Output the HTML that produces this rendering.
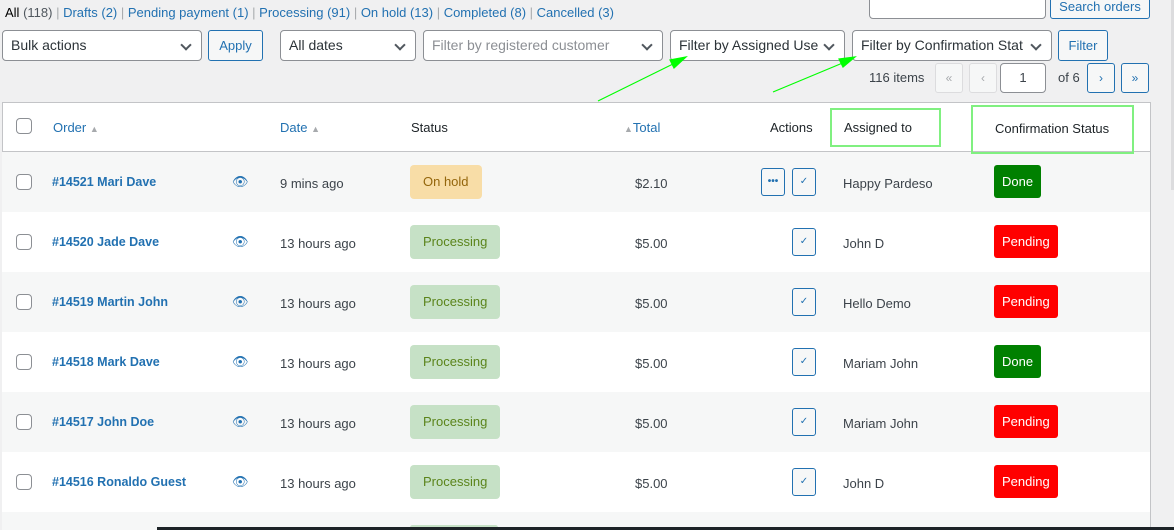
<!DOCTYPE html>
<html style="width:1174px;height:530px;overflow:hidden"><head><meta charset="utf-8"><style>
*{box-sizing:border-box;margin:0;padding:0}
body{width:1174px;height:530px;overflow:hidden;background:#f0f0f1;font-family:"Liberation Sans",sans-serif;font-size:13px;color:#3c434a;position:relative}
.a{position:absolute}
a,.lk{color:#2271b1;text-decoration:none}
.sel{position:absolute;height:31px;background:#fff;border:1px solid #8c8f94;border-radius:4px;padding:0 8px;line-height:29px;font-size:14px;color:#2c3338;white-space:nowrap;overflow:hidden}
.sel span{display:block;overflow:hidden;white-space:nowrap}
.sel:after{content:"";position:absolute;right:11px;top:10px;width:6px;height:6px;border-right:2px solid #50575e;border-bottom:2px solid #50575e;transform:rotate(45deg)}
.btn{position:absolute;height:31px;border:1px solid #2271b1;border-radius:3px;background:#f6f7f7;color:#2271b1;text-align:center;line-height:29px;font-size:13px}
.pg{position:absolute;top:63px;width:28px;height:30px;border:1px solid #2271b1;border-radius:3px;background:#f6f7f7;color:#2271b1;text-align:center;line-height:28px;font-size:12px}
.pg.d{border-color:#dcdcde;color:#a7aaad}
.row{position:absolute;left:2px;width:1148px;height:60px}
.cb{position:absolute;left:16px;width:16px;height:16px;border:1px solid #8c8f94;border-radius:4px;background:#fff}
.st{position:absolute;left:410px;height:34px;border-radius:4px;line-height:34px;padding:0 13px;font-size:13px}
.pr{background:#c6e1c6;color:#5b841b}
.oh{background:#f8dda7;color:#94660c}
.ab{position:absolute;width:24px;height:28px;border:1px solid #2271b1;border-radius:3px;background:#f6f7f7;color:#2271b1;text-align:center;line-height:26px;font-size:10px}
.cs{position:absolute;left:994px;height:33px;border-radius:3px;color:#fff;line-height:33px;font-size:13px;padding:0 8px}
.done{background:#008000}.pend{background:#ff0000}
.ol{font-weight:bold;font-size:12.5px}
</style></head><body>
<div class="a" style="left:5px;top:5px;font-size:13px;white-space:nowrap;color:#a7aaad"><span style="color:#000">All</span> <span style="color:#50575e">(118)</span> | <a>Drafts (2)</a> | <a>Pending payment (1)</a> | <a>Processing (91)</a> | <a>On hold (13)</a> | <a>Completed (8)</a> | <a>Cancelled (3)</a></div>
<div class="a" style="left:869px;top:-12px;width:177px;height:31px;background:#fff;border:1px solid #8c8f94;border-radius:4px"></div>
<div class="btn" style="left:1050px;top:-12px;width:100px;height:31px;line-height:35px">Search orders</div>
<div class="sel" style="left:2px;top:30px;width:200px">Bulk actions</div>
<div class="btn" style="left:208px;top:30px;width:55px">Apply</div>
<div class="sel" style="left:280px;top:30px;width:136px">All dates</div>
<div class="sel" style="left:423px;top:30px;width:240px;color:#8c8f94">Filter by registered customer</div>
<div class="sel" style="left:670px;top:30px;width:175px;padding-right:26px"><span>Filter by Assigned User</span></div>
<div class="sel" style="left:852px;top:30px;width:200px;padding-right:28px"><span>Filter by Confirmation Status</span></div>
<div class="btn" style="left:1058px;top:30px;width:50px">Filter</div>
<div class="a" style="left:869px;top:70px;font-size:13px">116 items</div>
<div class="pg d" style="left:935px">«</div>
<div class="pg d" style="left:969px">‹</div>
<div class="a" style="left:1000px;top:63px;width:46px;height:30px;background:#fff;border:1px solid #8c8f94;border-radius:4px;text-align:center;line-height:28px;font-size:13px">1</div>
<div class="a" style="left:1058px;top:70px">of 6</div>
<div class="pg" style="left:1087px">›</div>
<div class="pg" style="left:1121px">»</div>
<!-- table -->
<div class="a" style="left:2px;top:102px;width:1149px;height:428px;background:#fff;border:1px solid #c3c4c7;border-bottom:none"></div>
<div class="a" style="left:2px;top:151px;width:1148px;height:1px;background:#c3c4c7"></div>
<div class="cb" style="top:118px"></div>
<div class="a lk" style="left:53px;top:120px;font-size:13px">Order <span style="color:#a7aaad;font-size:9px">▲</span></div>
<div class="a lk" style="left:280px;top:120px">Date <span style="color:#a7aaad;font-size:9px">▲</span></div>
<div class="a" style="left:411px;top:120px;color:#1d2327">Status</div>
<div class="a lk" style="left:624px;top:120px"><span style="color:#a7aaad;font-size:9px">▲</span>Total</div>
<div class="a" style="left:770px;top:120px;color:#1d2327">Actions</div>

<div class="row" style="top:152px;background:#f6f7f7"></div>
<div class="row" style="top:212px;background:#fff"></div>
<div class="row" style="top:272px;background:#f6f7f7"></div>
<div class="row" style="top:332px;background:#fff"></div>
<div class="row" style="top:392px;background:#f6f7f7"></div>
<div class="row" style="top:452px;background:#fff"></div>
<div class="row" style="top:512px;background:#f6f7f7;height:18px"></div>

<div class="a" style="left:830px;top:108px;width:111px;height:39px;border:2px solid #80f080;padding:10px 0 0 12px;color:#1d2327">Assigned to</div>
<div class="a" style="left:971px;top:105px;width:163px;height:49px;border:2px solid #80f080;padding:14px 0 0 22px;color:#1d2327">Confirmation Status</div>
<svg class="a" style="left:590px;top:55px" width="280" height="50"><g stroke="#00ff00" stroke-width="1.2" fill="#00ff00"><line x1="8" y1="46" x2="85" y2="8"/><polygon points="96,2 80,5 84,13"/><line x1="183" y1="37" x2="255" y2="7"/><polygon points="265,2 249,4 253,12"/></g></svg>

<div class="cb" style="top:174px"></div><div class="a lk ol" style="left:52px;top:175px">#14521 Mari Dave</div><div class="a lk" style="left:232px;top:174px">👁</div><div class="a" style="left:280px;top:176px">9 mins ago</div><div class="st oh" style="top:165px">On hold</div><div class="a" style="left:635px;top:176px">$2.10</div><div class="ab" style="left:761px;top:168px;font-weight:bold">•••</div><div class="ab" style="left:792px;top:168px">✓</div><div class="a" style="left:843px;top:176px">Happy Pardeso</div><div class="cs done" style="top:165px">Done</div>
<div class="cb" style="top:234px"></div><div class="a lk ol" style="left:52px;top:235px">#14520 Jade Dave</div><div class="a lk" style="left:232px;top:234px">👁</div><div class="a" style="left:280px;top:236px">13 hours ago</div><div class="st pr" style="top:225px">Processing</div><div class="a" style="left:635px;top:236px">$5.00</div><div class="ab" style="left:792px;top:228px">✓</div><div class="a" style="left:843px;top:236px">John D</div><div class="cs pend" style="top:225px">Pending</div>
<div class="cb" style="top:294px"></div><div class="a lk ol" style="left:52px;top:295px">#14519 Martin John</div><div class="a lk" style="left:232px;top:294px">👁</div><div class="a" style="left:280px;top:296px">13 hours ago</div><div class="st pr" style="top:285px">Processing</div><div class="a" style="left:635px;top:296px">$5.00</div><div class="ab" style="left:792px;top:288px">✓</div><div class="a" style="left:843px;top:296px">Hello Demo</div><div class="cs pend" style="top:285px">Pending</div>
<div class="cb" style="top:354px"></div><div class="a lk ol" style="left:52px;top:355px">#14518 Mark Dave</div><div class="a lk" style="left:232px;top:354px">👁</div><div class="a" style="left:280px;top:356px">13 hours ago</div><div class="st pr" style="top:345px">Processing</div><div class="a" style="left:635px;top:356px">$5.00</div><div class="ab" style="left:792px;top:348px">✓</div><div class="a" style="left:843px;top:356px">Mariam John</div><div class="cs done" style="top:345px">Done</div>
<div class="cb" style="top:414px"></div><div class="a lk ol" style="left:52px;top:415px">#14517 John Doe</div><div class="a lk" style="left:232px;top:414px">👁</div><div class="a" style="left:280px;top:416px">13 hours ago</div><div class="st pr" style="top:405px">Processing</div><div class="a" style="left:635px;top:416px">$5.00</div><div class="ab" style="left:792px;top:408px">✓</div><div class="a" style="left:843px;top:416px">Mariam John</div><div class="cs pend" style="top:405px">Pending</div>
<div class="cb" style="top:474px"></div><div class="a lk ol" style="left:52px;top:475px">#14516 Ronaldo Guest</div><div class="a lk" style="left:232px;top:474px">👁</div><div class="a" style="left:280px;top:476px">13 hours ago</div><div class="st pr" style="top:465px">Processing</div><div class="a" style="left:635px;top:476px">$5.00</div><div class="ab" style="left:792px;top:468px">✓</div><div class="a" style="left:843px;top:476px">John D</div><div class="cs pend" style="top:465px">Pending</div>
<div class="st pr" style="top:525px;height:5px;width:88px"></div>
<div class="a" style="left:157px;top:527px;width:1017px;height:3px;background:#1d2327"></div>
<div class="a" style="left:1171px;top:0;width:3px;height:190px;background:#dcdcde"></div>
</body></html>
